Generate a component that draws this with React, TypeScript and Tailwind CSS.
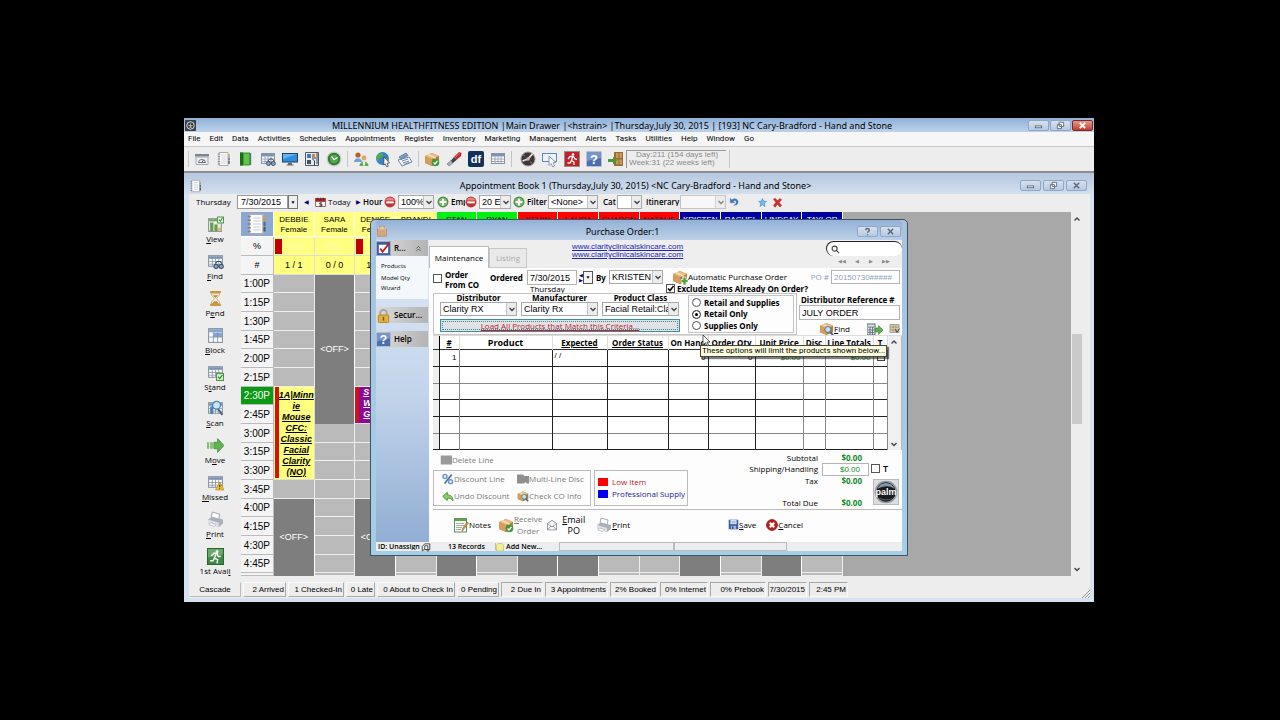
import type { ReactNode } from 'react';
import clsx from 'clsx';

// ---------------------------------------------------------------- icons

const calendar = (
  <>
    <rect x="1.5" y="2.5" width="13" height="10" fill="#fff" stroke="#8793a3" />
    <rect x="2" y="3" width="12" height="2.5" fill="#7d93b5" />
    <path d="M2 8h12M2 10.5h12M5 5.5v7M8 5.5v7M11 5.5v7" stroke="#8a96a8" strokeWidth=".8" />
  </>
);

const carton = (
  <>
    <path d="M1 5l7-3 7 3v7l-7 3-7-3z" fill="#b9783c" />
    <path d="M1 5l7 3v7l-7-3z" fill="#d79b5b" />
    <path d="M1 5l7-3 7 3-7 3z" fill="#e8bd84" />
    <path d="M4 3.7l7 3v2.5" stroke="#f6e3c0" strokeWidth="1.3" fill="none" />
  </>
);

const notebook = (
  <>
    <path d="M3 1.5h9v13H3z" fill="#fbfbfb" stroke="#a8adb5" />
    <path d="M5.5 4h5M5.5 6h5M5.5 8h5M5.5 10h5M5.5 12h5" stroke="#c9ced6" strokeWidth=".8" />
    <path d="M1.8 3h2M1.8 5.5h2M1.8 8h2M1.8 10.5h2M1.8 13h2" stroke="#7c828c" strokeWidth="1" />
    <path d="M13 3v3" stroke="#d59a33" strokeWidth="1.4" />
    <path d="M13 6.5v3" stroke="#3c6db0" strokeWidth="1.4" />
    <path d="M13 10v3" stroke="#555" strokeWidth="1.4" />
  </>
);

const printer = (
  <>
    <path d="M5 1l7 2-1 5-7-2z" fill="#fff" stroke="#8d97a5" strokeWidth=".8" />
    <path d="M1 8l4-2.5 10 2.5v4l-4 3-10-3.5z" fill="#a9b0ba" />
    <path d="M1 8l10 3v4L1 11.5z" fill="#dde1e6" />
    <path d="M3.5 11l5 1.6-1.5 2-5-1.6z" fill="#fff" stroke="#9aa2ad" strokeWidth=".6" />
  </>
);

const binoculars = (
  <g stroke="#3a4c66" fill="#8ea6c6">
    <circle cx="8.5" cy="12.5" r="2" />
    <circle cx="13.3" cy="12.5" r="2" />
    <path d="M8 10l1.5-2h3L14 10" fill="none" />
  </g>
);

const ICONS: Record<string, ReactNode> = {
  calendar,
  carton,
  notebook,
  printer,
  gauge: (
    <>
      <rect width="16" height="16" rx="1" fill="#3d4247" />
      <circle cx="8" cy="8" r="5.5" fill="none" stroke="#e5e8ea" strokeWidth="1.3" />
      <path d="M5 8h6M8 5v6M6 10.5h4" stroke="#cfd4d8" />
    </>
  ),
  register: (
    <>
      <rect x="1" y="3" width="14" height="2.5" fill="#7c8691" />
      <path d="M2 6h12v7.500H2z" fill="#eceff2" stroke="#a0a8b2" />
      <path d="M4.500 11.500a3.500 3 0 0 1 7 0z" fill="#fff" stroke="#66707c" />
      <path d="M8 11l1.500-2" stroke="#a33" />
    </>
  ),
  greenBook: (
    <>
      <path d="M2 1.5h10v13H2z" fill="#3ea32d" />
      <path d="M2 1.5h3v13H2z" fill="#1e6d19" />
      <path d="M6 3h5v10H6z" fill="#62c449" />
      <path d="M12.5 2v12" stroke="#4a7a8a" strokeWidth="1.4" />
    </>
  ),
  calendarFind: (
    <>
      {calendar}
      {binoculars}
    </>
  ),
  monitor: (
    <>
      <rect x="0" y="2" width="16" height="9.500" fill="#21405f" />
      <rect x="1" y="3" width="14" height="7.500" fill="#2f8ede" />
      <path d="M1 3h14L1 8z" fill="#63b4f2" />
      <path d="M6.500 12h3v1.500h-3zM4.500 14h7" fill="#667" stroke="#667" />
    </>
  ),
  report: (
    <>
      <path d="M1.5 1.5h13v13h-13z" fill="#e7ebf0" stroke="#4f5a68" />
      <path d="M3 3h4v4H3z" fill="#4678bd" />
      <path d="M8 3h3v3H8z" fill="#cf8b31" />
      <path d="M3 9h4v4H3z" fill="#43515f" />
      <path d="M8.5 8l2 2v4M13 2v11M8 7h4" stroke="#36404c" fill="none" />
    </>
  ),
  clock: (
    <>
      <circle cx="8" cy="8" r="6.8" fill="#2f8035" stroke="#c4c9c4" strokeWidth="1.2" />
      <circle cx="8" cy="8" r="4.200" fill="#57a84a" />
      <path d="M5.500 5.500L8 8.500l3.500-2" stroke="#fff" strokeWidth="1.2" fill="none" />
    </>
  ),
  people: (
    <>
      <circle cx="5" cy="4" r="2.6" fill="#b3602e" />
      <path d="M1 11c0-5 8-5 8 0z" fill="#6fa2d8" />
      <circle cx="11" cy="7" r="2.4" fill="#dba56c" />
      <path d="M6.5 15c0-6 9-6 9 0z" fill="#5cb04c" />
      <path d="M10 10.5h2v4h-2z" fill="#fff" />
    </>
  ),
  globe: (
    <>
      <circle cx="7.5" cy="7.5" r="6.5" fill="#3c7fc8" />
      <path d="M3 3c3-2 6 0 5 2s-4 1-4 4-2 0-3-2zM10 7c3 0 4 1 3 4s-3 1-4-1z" fill="#4fae48" />
      <path d="M9 6l5.5 6-2.5.2 1.2 3-1.600.6-1.200-3-1.600 1.400z" fill="#fff" stroke="#333" strokeWidth=".7" />
    </>
  ),
  phone: (
    <>
      <path d="M1 9l11-3 3 5-10 4z" fill="#f3f6f9" stroke="#75859a" />
      <path d="M2 6l7-4 2 2.500-7 4z" fill="#7d9cc3" stroke="#4f6f9a" strokeWidth=".7" />
      <path d="M5 10l6-2M6 12l6-2M7 13.500l5-2" stroke="#5f7ea8" strokeWidth=".9" />
    </>
  ),
  cartonOk: (
    <>
      {carton}
      <circle cx="11.500" cy="11.500" r="3.800" fill="#3e9b3b" />
      <path d="M9.600 11.500l1.400 1.500 2.500-3" stroke="#fff" strokeWidth="1.200" fill="none" />
    </>
  ),
  cartonAdd: (
    <>
      {carton}
      <path d="M11 8h3v2.500h2v3h-2V16h-3v-2.500H9v-3h2z" fill="#49a83c" stroke="#fff" strokeWidth=".7" />
    </>
  ),
  cartonFind: (
    <>
      {carton}
      <path d="M11 11l4 4" stroke="#4a6076" strokeWidth="2" />
      <circle cx="9.500" cy="9" r="3.200" fill="#bfe2f7" stroke="#47718f" />
    </>
  ),
  lipstick: (
    <>
      <path d="M1 13l4-3.500L7 12l-4 3z" fill="#a9b0b8" stroke="#6b7177" strokeWidth=".6" />
      <path d="M5 9.500L8 6l3 2.500L7 12z" fill="#3f444a" />
      <path d="M8 6l5-5 2.500 1-.5 3-4 3.500z" fill="#c41f24" />
      <path d="M9.500 6.500L13.500 2" stroke="#ef8b84" strokeWidth=".9" />
    </>
  ),
  df: (
    <>
      <rect width="16" height="16" rx="2" fill="#12305c" />
      <text x="8" y="12" fontSize="11" fontWeight="700" textAnchor="middle" fill="#fff" fontFamily="Liberation Sans, sans-serif">df</text>
    </>
  ),
  disc: (
    <>
      <circle cx="8" cy="8" r="7" fill="#3b3739" stroke="#9a9697" />
      <path d="M8 8L12.500 2.800M8 8L2.500 10" stroke="#e8dcdc" strokeWidth="1.800" />
      <path d="M3 4l2 1M12 12l-2-1" stroke="#bd5b4d" strokeWidth="1.300" />
      <circle cx="8" cy="8" r="1.800" fill="#c4b6b4" />
    </>
  ),
  pointer: (
    <>
      <rect x=".5" y="2.500" width="14" height="8" fill="#edf3fb" stroke="#5e88c0" />
      <path d="M7 5l7 6.500-3 .3 1.500 3.200-1.800.8L9 12.500 7 14.500z" fill="#fff" stroke="#6583ab" strokeWidth=".8" />
    </>
  ),
  exitRun: (
    <>
      <rect x=".5" y=".5" width="15" height="15" fill="#c41e26" stroke="#8f8f8f" />
      <circle cx="9" cy="3.500" r="1.300" fill="#fff" />
      <path d="M4 8l2-2.500h3.500L11 8l2 .5M8.500 6L7.500 9.500l2.500 1.500v3M7.500 9.500L6 12H3.500" stroke="#fff" strokeWidth="1.300" fill="none" />
    </>
  ),
  help: (
    <>
      <rect x=".5" y=".5" width="15" height="15" rx="1" fill="#4a6fae" stroke="#b4c0d4" />
      <path d="M1 1h14v6L1 10z" fill="#7795c8" />
      <text x="8" y="12.800" fontSize="13" fontWeight="700" textAnchor="middle" fill="#fff" fontFamily="Liberation Sans, sans-serif">?</text>
    </>
  ),
  door: (
    <>
      <path d="M6 1h9v14H6z" fill="#9a6b32" />
      <path d="M8 2h2.500v5H8zM11.500 2H14v5h-2.500zM8 8.500h2.500v5H8zM11.500 8.500H14v5h-2.500z" fill="#c99a58" />
      <path d="M0 8h5V5.500l4 4-4 4V11H0z" fill="#3f9c36" />
    </>
  ),
  calendarRed: (
    <>
      <rect x="1" y="2" width="14" height="12" fill="#fff" stroke="#722" />
      <rect x="1" y="2" width="14" height="5" fill="#a52222" />
      <path d="M4 1v3M8 1v3M12 1v3" stroke="#333" strokeWidth="1.300" />
      <path d="M10 8.500H7v2h3v2.500H6.500" stroke="#222" strokeWidth="1.400" fill="none" />
    </>
  ),
  minus: (
    <>
      <circle cx="8" cy="8" r="7.300" fill="#c23333" />
      <path d="M2 6a6.500 6.500 0 0 1 12 0z" fill="#e08583" />
      <path d="M3 8.500h10" stroke="#fff" strokeWidth="2.600" />
    </>
  ),
  plus: (
    <>
      <circle cx="8" cy="8" r="7.300" fill="#3f8f3c" />
      <circle cx="8" cy="8" r="5.800" fill="#7cb873" />
      <path d="M3.500 8h9M8 3.500v9" stroke="#fff" strokeWidth="2.600" />
    </>
  ),
  undo: (
    <path d="M2 2v7h7L6.500 6.700C9 4.500 12 6 11.500 9c-.3 2-1.800 3.500-4 4 4 .8 7-1.500 7-5.500C14.500 3 8 1.500 4.400 4.600z" fill="#3c7cc4" stroke="#2a5c98" strokeWidth=".6" />
  ),
  star: (
    <path d="M8 1l2 4.500 5 .5-3.700 3.300L12.500 15 8 12l-4.500 3 1.200-5.700L1 6l5-.5z" fill="#79b8ec" stroke="#3b83c4" />
  ),
  cross: <path d="M2 3l3-1 3 3.500L11.500 2 14 4l-3.500 4 3.500 4.500-2.500 2L8 10.500 4.500 15 2 12.500 5.500 8z" fill="#d0302b" stroke="#982019" strokeWidth=".6" />,
  view: (
    <>
      <rect x="1.500" y="2.500" width="12" height="12" fill="#e8efe0" stroke="#8793a3" />
      <path d="M2 3h11v2H2z" fill="#7da05b" />
      <path d="M3 6h3v8H3zM7 8h3v6H7z" fill="#6d9a4d" />
      <path d="M10.500 11h3v3h-3z" fill="#d7c163" />
      <rect x="10" y="1" width="5.500" height="5.500" fill="#fff" stroke="#4a9b3f" />
      <path d="M11.300 3.500l1.200 1.300 2-2.800" stroke="#2f8e2a" fill="none" />
    </>
  ),
  hourglass: (
    <>
      <path d="M3 1h10v2H3zM3 13h10v2H3z" fill="#c8953a" />
      <path d="M4 3h8c0 3-3 4-3 5s3 2 3 5H4c0-3 3-4 3-5S4 6 4 3z" fill="#f4ecd9" stroke="#c2a574" strokeWidth=".8" />
      <path d="M5.500 5h5L8 7.500zM5 13c1-2 2-2.500 3-2.500s2 .5 3 2.500z" fill="#c98a2b" />
    </>
  ),
  block: (
    <>
      <rect x="1.500" y="1.500" width="13" height="13" fill="#f7f9fc" stroke="#8793a3" />
      <rect x="2" y="2" width="12" height="3" fill="#8ea3c6" />
      <path d="M6 5.500h4v4H6zM10 5.500h4v4h-4z" fill="#7ea4d8" />
      <path d="M2 9.500h12M6 5v9.500M10 5v9.500" stroke="#8a96a8" strokeWidth=".8" />
    </>
  ),
  calendarOk: (
    <>
      {calendar}
      <rect x="9" y="9" width="6.500" height="6.500" fill="#dff0d8" stroke="#4a9b3f" />
      <path d="M10.500 12l1.500 1.700 2.600-3.400" stroke="#2f8e2a" strokeWidth="1.200" fill="none" />
    </>
  ),
  scan: (
    <>
      {calendar}
      <path d="M3 6h3v7H3z" fill="#5080b8" />
      <path d="M10 8l4.500 6" stroke="#4a6076" strokeWidth="1.800" />
      <circle cx="9" cy="5" r="3.700" fill="#c9e6f8" stroke="#4a87b5" strokeWidth="1.200" />
    </>
  ),
  move: (
    <>
      <path d="M0 5h2v6H0zM3 5h2.500v6H3z" fill="#7fbf6b" />
      <path d="M6.500 5H10V1.500L16 8l-6 6.500V11H6.500z" fill="#62b250" stroke="#3c8a33" strokeWidth=".7" />
    </>
  ),
  missed: (
    <>
      {calendar}
      <path d="M12 7.500l4 7.500H8z" fill="#f2c43b" stroke="#b98a18" strokeWidth=".7" />
      <path d="M12 10v2.500M12 13.300v.8" stroke="#222" />
    </>
  ),
  avail: (
    <>
      <rect x=".5" y=".5" width="15" height="15" fill="#3f8a45" stroke="#2a6831" />
      <path d="M1 1h14v5L1 9z" fill="#69a868" />
      <circle cx="9.500" cy="3.500" r="1.400" fill="#fff" />
      <path d="M4 7.500L6.500 5h3l1 3h2.500M8.500 6L7 9.500l3 1.500-.5 3.500M7 9.500L5.500 12H3" stroke="#fff" strokeWidth="1.300" fill="none" />
    </>
  ),
  checkBox: (
    <>
      <rect x=".5" y=".5" width="15" height="15" fill="#3a5da0" stroke="#9fb0cc" />
      <rect x="3" y="4" width="10" height="9" fill="#fff" />
      <path d="M4.500 8l2.500 3.500L14 2.500" stroke="#c01f24" strokeWidth="2" fill="none" />
    </>
  ),
  lock: (
    <>
      <path d="M4.500 8V5.500a3.500 3.500 0 0 1 7 0V8" stroke="#a5a5a0" strokeWidth="2" fill="none" />
      <rect x="2.500" y="7.500" width="11" height="8" rx="1" fill="#e4b23c" stroke="#b28321" />
      <path d="M8 9.500v4" stroke="#7d5a12" strokeWidth="1.600" />
    </>
  ),
  calcGo: (
    <>
      <rect x="0" y="3" width="8" height="11" fill="#dfe4ea" stroke="#596675" />
      <path d="M1 6h6M1 9h6M1 11.500h6M3 6v8M5.500 6v8" stroke="#596675" strokeWidth=".8" />
      <path d="M8 7h3.500V4.500L16 9l-4.500 4.500V11H8z" fill="#5cb24a" stroke="#357c2b" strokeWidth=".6" />
    </>
  ),
  gridEdit: (
    <>
      <rect x="1.500" y="2.500" width="13" height="11" fill="#f0d98f" stroke="#687386" />
      <path d="M2 6h12M2 10h12M6 3v10M10 3v10" stroke="#687386" strokeWidth=".8" />
      <path d="M9 9l2.500 4.500L15.500 8" stroke="#333e55" strokeWidth="1.300" fill="none" />
    </>
  ),
  grayBlock: <rect x="1" y="2" width="15" height="12" fill="#9a9a9a" />,
  grayTag: <path d="M0 2h8l2 2h6v10h-3l-2-2-2 2H0z" fill="#8e8e8e" />,
  percent: (
    <>
      <path d="M13 2L3.500 14" stroke="#4673a8" strokeWidth="2.400" />
      <circle cx="4" cy="4.500" r="2.600" fill="none" stroke="#6b96c6" strokeWidth="2" />
      <circle cx="11.500" cy="11.500" r="2.600" fill="none" stroke="#6b96c6" strokeWidth="2" />
    </>
  ),
  undoGreen: (
    <path d="M1 8.500L7 3v3.500c5 0 8 3 7.500 8-1.500-3-4-4-7.500-3.500V14z" fill="#8ccf6f" stroke="#3f8f33" strokeWidth="1.200" />
  ),
  notes: (
    <>
      <rect x="1.500" y="1.500" width="12" height="13.500" fill="#fff" stroke="#5d8f56" />
      <path d="M1.500 1.500h12v2.500h-12z" fill="#5fa052" />
      <path d="M3 6.500h8M3 8.500h8M3 10.500h6M3 12.500h5" stroke="#94a594" strokeWidth=".9" />
      <path d="M15.500 6l-5 6.500-1.500 2 .3-2.700L14 5z" fill="#d99c3f" stroke="#7b5521" strokeWidth=".5" />
    </>
  ),
  envelope: (
    <>
      <path d="M2 6l6-4.500L14 6v8.500H2z" fill="#f3f4f6" stroke="#7d8490" />
      <path d="M2 6l6 4.500L14 6M2 14.500l4.500-5M14 14.500l-4.500-5" stroke="#7d8490" fill="none" />
    </>
  ),
  floppy: (
    <>
      <path d="M1 1h14v14H1z" fill="#3d62a8" />
      <path d="M3.500 1.500h9v6h-9z" fill="#dfe8f6" />
      <path d="M5 3.500h6M5 5.500h6" stroke="#7d95c0" strokeWidth=".9" />
      <path d="M4.500 10h7v5h-7z" fill="#aab9d4" />
      <path d="M6 11h2v3.500H6z" fill="#2b477f" />
    </>
  ),
  cancel: (
    <>
      <circle cx="8" cy="8" r="7.300" fill="#b7211f" stroke="#7d1413" />
      <path d="M5 5l6 6M11 5l-6 6" stroke="#fff" strokeWidth="3" />
    </>
  ),
  bag: (
    <>
      <path d="M2 5h12v10H2z" fill="#d6a77c" stroke="#a87a52" strokeWidth=".7" />
      <path d="M3 2.500h10V6H3z" fill="#e9c9a8" />
      <path d="M5 5V1.500h2M9 1.500h2V5" stroke="#b98a62" fill="none" />
    </>
  ),
  sheets: (
    <>
      <path d="M2 7l4-4h8v9H6l-4 2z" fill="#fff" stroke="#222" strokeWidth="1.300" />
      <path d="M6 12V6h5v6M9 14h4" stroke="#222" fill="none" strokeWidth="1.300" />
    </>
  ),
  note: <path d="M1 4l3-3h8l3 4v11H1z" fill="#f4ef8e" stroke="#9a9548" strokeWidth=".8" />,
};

function Icon({ name, className = 'size-4' }: { name: string; className?: string }) {
  return (
    <svg viewBox="0 0 16 16" className={clsx('shrink-0', className)} aria-hidden="true">
      {ICONS[name]}
    </svg>
  );
}

function Chevron({ up, className }: { up?: boolean; className?: string }) {
  return (
    <svg viewBox="0 0 8 8" className={clsx('size-2 shrink-0', className)} aria-hidden="true">
      <path d={up ? 'M1.500 5.500L4 3l2.500 2.500' : 'M1.500 3L4 5.500 6.500 3'} fill="none" stroke="#444" strokeWidth="1.400" />
    </svg>
  );
}

// ---------------------------------------------------------------- controls

function Combo({ label, value, className, disabled }: { label: string; value: string; className?: string; disabled?: boolean }) {
  return (
    <span className={clsx('relative flex h-[14px] shrink-0 border border-[#a9a9a9] bg-white', disabled && 'opacity-60', className)}>
      <select
        aria-label={label}
        disabled={disabled}
        className="w-full appearance-none overflow-hidden pl-[2px] font-['Liberation_Sans',sans-serif] text-[9px] leading-[12px] font-normal whitespace-nowrap"
      >
        <option>{value}</option>
      </select>
      <span className="pointer-events-none absolute inset-y-0 right-0 flex w-[10px] items-center justify-center border-l border-[#c4c4c4] bg-[#ececec]">
        <Chevron />
      </span>
    </span>
  );
}

function WinButton({ kind, red }: { kind: 'min' | 'max' | 'close' | 'help'; red?: boolean }) {
  return (
    <button
      aria-label={kind}
      className={clsx(
        'flex h-[11px] w-[21px] items-center justify-center rounded-[2px] border',
        red ? 'border-[#7d2a22] bg-linear-to-b from-[#e39a8e] to-[#c23a28]' : 'border-[#8fa6c4] bg-linear-to-b from-[#d5e1f0] to-[#b7cae2]',
      )}
    >
      <svg viewBox="0 0 10 10" className="size-[9px]" fill="none" stroke={red ? '#fff' : '#5b6779'}>
        {kind === 'min' && <rect x="1.500" y="5.500" width="7" height="2" fill="#fff" />}
        {kind === 'max' && <path d="M3.500 1.500h5v4.500h-5zM1.500 4h4.500v4.500H1.500z" fill="#fff" />}
        {kind === 'close' && <path d="M2 2l6 6M8 2L2 8" strokeWidth={red ? 2 : 1.6} />}
        {kind === 'help' && <path d="M3 3.500C3 1 7 1 7 3.500 7 5 5 5 5 6.500M5 8v1.200" strokeWidth="1.600" />}
      </svg>
    </button>
  );
}

/* Caption whose access key is underlined */
function Caption({ text, hot = 0 }: { text: string; hot?: number }) {
  return (
    <span>
      {text.slice(0, hot)}
      <u>{text[hot]}</u>
      {text.slice(hot + 1)}
    </span>
  );
}

// ---------------------------------------------------------------- data

const MENUS = ['File', 'Edit', 'Data', 'Activities', 'Schedules', 'Appointments', 'Register', 'Inventory', 'Marketing', 'Management', 'Alerts', 'Tasks', 'Utilities', 'Help', 'Window', 'Go'];

const TOOLS = [
  ['register', 'notebook', 'greenBook', 'calendarFind', 'monitor', 'report', 'clock'],
  ['people', 'globe', 'phone'],
  ['cartonOk', 'lipstick', 'df', 'calendar'],
  ['disc', 'pointer', 'exitRun', 'help', 'door'],
];

const SIDE: { icon: string; text: string; hot: number }[] = [
  { icon: 'view', text: 'View', hot: 0 },
  { icon: 'calendarFind', text: 'Find', hot: 0 },
  { icon: 'hourglass', text: 'Pend', hot: 1 },
  { icon: 'block', text: 'Block', hot: 0 },
  { icon: 'calendarOk', text: 'Stand', hot: 1 },
  { icon: 'scan', text: 'Scan', hot: 0 },
  { icon: 'move', text: 'Move', hot: 1 },
  { icon: 'missed', text: 'Missed', hot: 0 },
  { icon: 'printer', text: 'Print', hot: 0 },
  { icon: 'avail', text: '1st Avail', hot: 8 },
];

type Block = { from: number; rows: number; kind: 'off' | 'minnie' | 'purple' };
type Staff = { name: string; tone: string; pct?: string; bar?: boolean; count?: string; blocks: Block[] };

const YELLOW = 'bg-[#ffff80] text-black';
const GREEN = 'bg-[#00f010] text-black';
const RED = 'bg-[#fb0404] text-[#500]';
const NAVY = 'bg-[#0000a0] text-white';
const allOff: Block[] = [{ from: 0, rows: 17, kind: 'off' }];

const STAFF: Staff[] = [
  { name: 'DEBBIE', tone: YELLOW, pct: '41%', bar: true, count: '1 / 1', blocks: [{ from: 6, rows: 5, kind: 'minnie' }, { from: 12, rows: 5, kind: 'off' }] },
  { name: 'SARA', tone: YELLOW, pct: '0%', count: '0 / 0', blocks: [{ from: 0, rows: 8, kind: 'off' }] },
  { name: 'DENISE', tone: YELLOW, bar: true, count: '1 / 1', blocks: [{ from: 6, rows: 2, kind: 'purple' }, { from: 12, rows: 5, kind: 'off' }] },
  { name: 'BRANDI', tone: YELLOW, blocks: [] },
  { name: 'STAN', tone: GREEN, blocks: allOff },
  { name: 'RYAN', tone: GREEN, blocks: [] },
  { name: 'KEVIN', tone: RED, blocks: allOff },
  { name: 'LAURA', tone: RED, blocks: allOff },
  { name: 'SHARON', tone: RED, blocks: [] },
  { name: 'NATALIE', tone: RED, blocks: [] },
  { name: 'KRISTEN', tone: NAVY, blocks: allOff },
  { name: 'RACHEL', tone: NAVY, blocks: [] },
  { name: 'LINDSAY', tone: NAVY, blocks: allOff },
  { name: 'TAYLOR', tone: NAVY, blocks: [] },
];

const TIMES = ['1:00P', '1:15P', '1:30P', '1:45P', '2:00P', '2:15P', '2:30P', '2:45P', '3:00P', '3:15P', '3:30P', '3:45P', '4:00P', '4:15P', '4:30P', '4:45P', ''];

const STATUS: { text: string; className: string; raised?: boolean }[] = [
  { text: '2 Arrived', className: 'w-[43px]', raised: true },
  { text: '1 Checked-In', className: 'w-[56px]', raised: true },
  { text: '0 Late', className: 'w-[29px]', raised: true },
  { text: '0 About to Check In', className: 'w-[78px]', raised: true },
  { text: '0 Pending', className: 'w-[42px]', raised: true },
  { text: '2 Due In', className: 'w-[42px]' },
  { text: '3 Appointments', className: 'w-[63px]' },
  { text: '2% Booked', className: 'w-[48px]' },
  { text: '0% Internet', className: 'w-[48px]' },
  { text: '0% Prebook', className: 'w-[56px]' },
  { text: '7/30/2015', className: 'w-[39px]' },
  { text: '2:45 PM', className: 'w-[39px]' },
];

// ---------------------------------------------------------------- appointment book

function BlockCell({ block }: { block: Block }) {
  if (block.kind === 'minnie') {
    return (
      <td rowSpan={block.rows} className="border-r border-b border-[#ddd] bg-[#ffff80] p-0 align-top">
        <div className="ml-[1px] h-[91px] overflow-hidden border-l-4 border-[#d41010] pt-[3px] text-center text-[9px] leading-[11px] font-bold whitespace-nowrap italic underline">
          {['1A|Minn', 'ie', 'Mouse', 'CFC:', 'Classic', 'Facial', 'Clarity', '(NO)'].map((line) => (
            <div key={line} className="-mx-1">{line}</div>
          ))}
        </div>
      </td>
    );
  }
  if (block.kind === 'purple') {
    return (
      <td rowSpan={block.rows} className="border-r border-b border-[#ddd] bg-[#8b0a93] p-0 align-top text-white">
        <div className="h-[35px] border-l-4 border-[#d41010] pl-1 text-[9px] leading-[11px] font-bold italic underline">
          <div>S</div>
          <div>W</div>
          <div>G</div>
        </div>
      </td>
    );
  }
  return (
    <td rowSpan={block.rows} className="border-r border-white bg-[#7e7e7e] p-0 text-center text-[9px] leading-none text-white">
      &lt;OFF&gt;
    </td>
  );
}

function Schedule() {
  return (
    <div className="flex min-w-0 grow bg-[#a8a8a8]">
      <table className="w-[602px] shrink-0 table-fixed border-separate border-spacing-0 self-start font-['Liberation_Sans',sans-serif] leading-none">
        <colgroup>
          <col className="w-[33px]" />
          {STAFF.map((s) => <col key={s.name} />)}
        </colgroup>
        <thead>
          <tr className="h-[25px]">
            <th className="border-r border-b border-white bg-[#8ca8d0] p-0">
              <Icon name="notebook" className="mx-auto size-6" />
            </th>
            {STAFF.map((s) => (
              <th key={s.name} className={clsx('border-r border-b border-white p-0 pt-[3px] align-top text-[8px] leading-[10px] font-normal', s.tone)}>
                {s.name}
                <br />
                Female
              </th>
            ))}
          </tr>
          <tr className="h-[19px]">
            <th className="border-r border-b border-[#bbb] bg-[#f4f4f4] p-0 text-[9px] font-normal">%</th>
            {STAFF.map((s) => (
              <td key={s.name} className={clsx('border-r border-b border-[#ddd] p-0', s.tone)}>
                <div className="flex items-center">
                  <span className={clsx('ml-[1px] h-[15px] w-[7px]', s.bar && 'bg-[#c00000]')} />
                  <span className="pl-[4px] text-[9px] text-[#ffffb8]">{s.pct}</span>
                </div>
              </td>
            ))}
          </tr>
          <tr className="h-[19px]">
            <th className="border-r border-b border-[#bbb] bg-[#f4f4f4] p-0 text-[9px] font-normal">#</th>
            {STAFF.map((s) => (
              <td key={s.name} className={clsx('border-r border-b border-[#ddd] p-0 text-center text-[9px]', s.tone)}>{s.count}</td>
            ))}
          </tr>
        </thead>
        <tbody>
          {TIMES.map((time, row) => (
            <tr key={row} className={row === 16 ? 'h-[3px]' : row % 3 === 0 ? 'h-[18px]' : 'h-[19px]'}>
              <th
                className={clsx(
                  'border-r border-b border-[#bbb] p-0 pr-[3px] text-right text-[10px] font-normal',
                  time === '2:30P' ? 'bg-[#0a9a14] text-white' : 'bg-[#f4f4f4]',
                  time && 'pt-[1px]',
                )}
              >
                {time}
              </th>
              {STAFF.map((s) => {
                const block = s.blocks.find((b) => row >= b.from && row < b.from + b.rows);
                if (!block) return <td key={s.name} className="border-r border-b border-[#eee] bg-[#bababa] p-0" />;
                return block.from === row ? <BlockCell key={s.name} block={block} /> : null;
              })}
            </tr>
          ))}
        </tbody>
      </table>
      <div className="ml-auto flex w-[12px] flex-col items-center justify-between bg-[#eeedee] py-[3px]">
        <Chevron up />
        <div className="mb-[30px] h-[90px] w-[10px] bg-[#cacaca]" />
        <Chevron />
      </div>
    </div>
  );
}

function BookToolbar() {
  const caption = 'overflow-hidden whitespace-nowrap font-semibold';
  return (
    <div className="flex h-[18px] items-center pb-[2px] pl-[7px]">
      <span className="w-[41px]">Thursday</span>
      <input aria-label="Book date" defaultValue="7/30/2015" className="h-[14px] w-[51px] border border-[#999] bg-white pl-[3px] font-['Liberation_Sans',sans-serif] text-[9px]" />
      <button aria-label="Pick date" className="flex h-[14px] w-[10px] items-center justify-center border border-[#777] bg-[#eee] text-[5px]">▼</button>
      <button aria-label="Previous day" className="w-[17px] text-center text-[6px] text-[#00007a]">◀</button>
      <button className="flex w-[39px] items-center gap-[2px]">
        <Icon name="calendarRed" className="size-[11px]" />
        Today
      </button>
      <button aria-label="Next day" className="w-[9px] text-[6px] text-[#00007a]">▶</button>
      <span className={clsx(caption, 'w-[21px]')}>Hour</span>
      <button aria-label="Fewer hours" className="w-[14px]"><Icon name="minus" className="size-[12px]" /></button>
      <Combo label="Zoom" value="100%" className="w-[36px]" />
      <button aria-label="More hours" className="flex w-[17px] justify-center"><Icon name="plus" className="size-[12px]" /></button>
      <span className={clsx(caption, 'w-[14px]')}>Emp</span>
      <button aria-label="Fewer employees" className="w-[14px]"><Icon name="minus" className="size-[12px]" /></button>
      <Combo label="Employees" value="20 Employees" className="w-[32px]" />
      <button aria-label="More employees" className="flex w-[16px] justify-center"><Icon name="plus" className="size-[12px]" /></button>
      <span className={clsx(caption, 'w-[21px]')}>Filter</span>
      <Combo label="Filter" value="<None>" className="w-[50px]" />
      <span className={clsx(caption, 'w-[19px] pl-[5px]')}>Cat</span>
      <Combo label="Category" value="" className="w-[25px]" />
      <span className={clsx(caption, 'w-[38px] pl-[4px]')}>Itinerary</span>
      <Combo label="Itinerary" value="" disabled className="w-[46px]" />
      <button aria-label="Refresh" className="ml-[3px]"><Icon name="undo" className="size-[10px]" /></button>
      <button aria-label="Favourite" className="ml-[19px]"><Icon name="star" className="size-[9px]" /></button>
      <button aria-label="Close book" className="ml-[5px]"><Icon name="cross" className="size-[11px]" /></button>
    </div>
  );
}

// ---------------------------------------------------------------- purchase order

const COLUMNS: { head: string; col: string; underline?: boolean; first?: string }[] = [
  { head: '', col: 'w-[6px]' },
  { head: '#', col: 'w-[20px]', underline: true, first: '1' },
  { head: 'Product', col: 'w-[93px]' },
  { head: 'Expected', col: 'w-[55px]', underline: true, first: '/ /' },
  { head: 'Order Status', col: 'w-[61px]', underline: true },
  { head: 'On Hand', col: 'w-[40px]', first: '0' },
  { head: 'Order Qty', col: 'w-[47px]', underline: true, first: '0' },
  { head: 'Unit Price', col: 'w-[48px]', underline: true, first: '$0.00' },
  { head: 'Disc', col: 'w-[22px]', underline: true },
  { head: 'Line Totals', col: 'w-[48px]', underline: true, first: '$0.00' },
  { head: 'T', col: 'w-[14px]' },
];

const FIELD = "border border-[#b4b4b4] bg-white font-['Liberation_Sans',sans-serif]";
const BOLD = "font-['Noto_Sans',sans-serif] font-bold";

function PanelHead({ icon, text }: { icon: string; text: string }) {
  return (
    <h3 className="flex h-[16px] items-center gap-[3px] bg-linear-to-r from-[#dcdcdc] to-[#b4b4b4] text-[8px] font-semibold">
      <Icon name={icon} className="size-[15px]" />
      {text}
      {text === 'R...' && (
        <svg viewBox="0 0 8 8" className="mr-[6px] ml-auto size-[7px]" fill="none" stroke="#555">
          <path d="M1.500 4L4 1.500 6.500 4M1.500 7L4 4.500 6.500 7" />
        </svg>
      )}
    </h3>
  );
}

function LineItems() {
  return (
    <div className="flex border-t border-[#ddd]">
      <table className="w-[454px] table-fixed border-collapse bg-white leading-none">
        <colgroup>
          {COLUMNS.map((c, i) => <col key={i} className={c.col} />)}
        </colgroup>
        <thead>
          <tr className="h-[13px] border-b border-[#333]">
            {COLUMNS.map((c, i) => (
              <th key={i} className={clsx('p-0 pt-[1px] whitespace-nowrap', i === 0 ? 'border-r border-black bg-[#eee]' : i === 2 ? 'text-[9px]' : 'border-x border-[#ddd]', c.underline && 'underline')}>
                {c.head}
              </th>
            ))}
          </tr>
        </thead>
        <tbody>
          {[0, 1, 2, 3, 4, 5].map((row) => (
            <tr key={row} className={clsx('border-b', row % 3 === 2 ? 'h-[16px]' : 'h-[17px]', row === 1 || row === 4 ? 'border-[#888]' : 'border-[#222]')}>
              {COLUMNS.map((c, i) => (
                <td
                  key={i}
                  className={clsx(
                    "border-r p-0 pr-[2px] font-['Liberation_Sans',sans-serif] whitespace-nowrap",
                    i === 0 ? 'bg-[#eee]' : i === 3 ? 'pb-[4px] pl-[2px] text-left' : 'text-right',
                    c.first?.startsWith('$') && 'text-[#1c7c2c]',
                    i === 1 || i > 6 ? 'border-[#888]' : 'border-[#222]',
                  )}
                >
                  {row === 0 && c.first}
                  {row === 0 && c.head === 'T' && <input type="checkbox" aria-label="Taxable line" className="size-[8px] appearance-none border border-[#444] align-middle" />}
                </td>
              ))}
            </tr>
          ))}
        </tbody>
      </table>
      <div className="flex grow flex-col items-center justify-between border-r border-[#bbb] bg-[#f0f0f0] py-[2px]">
        <Chevron up />
        <Chevron />
      </div>
    </div>
  );
}

function Criteria() {
  const box = 'flex w-[77px] flex-col text-center leading-[8px]';
  return (
    <div className="flex h-[42px] pr-[2px]">
      <div className="flex w-[364px] shrink-0 border border-[#c4c4c4] pr-[2px]">
        <div className="flex w-[254px] shrink-0 flex-col pl-[6px]">
          <div className={clsx('flex gap-[4px]', BOLD)}>
            <div className={box}>Distributor<Combo label="Distributor" value="Clarity RX" /></div>
            <div className={box}>Manufacturer<Combo label="Manufacturer" value="Clarity Rx" /></div>
            <div className={box}>Product Class<Combo label="Product Class" value="Facial Retail:Clarity" /></div>
          </div>
          <button className="mt-[3px] h-[13px] w-[240px] border border-[#3c8f98] bg-[#dfe1e4] leading-[9px] text-[#c4202c] underline outline outline-offset-[-3px] outline-[#3c8f98] outline-dotted">
            Load All Products that Match this Criteria...
          </button>
        </div>
        <fieldset className={clsx('my-px flex grow flex-col justify-evenly border border-[#c4c4c4] pl-[3px]', BOLD)}>
          {['Retail and Supplies', 'Retail Only', 'Supplies Only'].map((text) => (
            <label key={text} className="flex items-center gap-[3px] leading-[10px] whitespace-nowrap">
              <input
                type="radio"
                name="scope"
                defaultChecked={text === 'Retail Only'}
                className="size-[9px] appearance-none rounded-full border border-[#555] bg-white checked:bg-black checked:shadow-[inset_0_0_0_2px_white]"
              />
              {text}
            </label>
          ))}
        </fieldset>
      </div>
      <div className="ml-[2px] flex min-w-0 grow flex-col">
        <label htmlFor="ref" className={clsx('pt-[2px] pl-[2px] leading-[10px] whitespace-nowrap', BOLD)}>Distributor Reference #</label>
        <input id="ref" defaultValue="JULY ORDER" className={clsx(FIELD, 'h-[15px] w-full pl-[2px] text-[9px]')} />
        <div className="flex h-[15px] items-center pt-[2px] pl-[20px]">
          <button className="flex items-center">
            <Icon name="cartonFind" className="size-[15px]" />
            <Caption text="Find" />
          </button>
          <button aria-label="Calculate" className="ml-auto"><Icon name="calcGo" className="size-[16px]" /></button>
          <button aria-label="Edit grid" className="ml-[6px]"><Icon name="gridEdit" className="size-[11px]" /></button>
        </div>
      </div>
    </div>
  );
}

function OrderHeader() {
  return (
    <div className="flex h-[25px] pt-[2px] pr-[2px]">
      <label className={clsx('flex w-[57px] shrink-0 items-start gap-[3px] leading-[10px] whitespace-nowrap', BOLD)}>
        <input type="checkbox" className="mt-[4px] size-[9px] shrink-0 appearance-none border border-[#555] bg-white" />
        <span>Order<br />From CO</span>
      </label>
      <label htmlFor="ordered" className={clsx('w-[37px] shrink-0 pt-[3px] leading-[10px]', BOLD)}>Ordered</label>
      <div className="flex w-[50px] shrink-0 flex-col">
        <input id="ordered" defaultValue="7/30/2015" className={clsx(FIELD, 'h-[15px] w-full pl-[2px] text-[9px]')} />
        <span className="pl-[3px] text-[8px] leading-[8px]">Thursday</span>
      </div>
      <div className="ml-[2px] flex h-[15px] items-center">
        <span className="flex w-[4px] flex-col text-[5px] text-[#00007a]"><span>◀</span><span>▶</span></span>
        <button aria-label="Pick order date" className="flex h-[13px] w-[10px] items-center justify-center border border-[#555] bg-[#f4f4f4] text-[5px]">▼</button>
      </div>
      <span className={clsx('w-[16px] pt-[3px] pl-[3px] leading-[10px]', BOLD)}>By</span>
      <Combo label="By" value="KRISTEN" className="w-[54px]" />
      <div className="ml-[3px] flex min-w-0 grow flex-col">
        <div className="flex h-[14px] items-center pl-[6px]">
          <button className="flex shrink-0 items-center whitespace-nowrap">
            <Icon name="cartonAdd" className="size-[16px]" />
            Automatic Purchase Order
          </button>
          <label htmlFor="po" className="ml-auto shrink-0 pr-[2px] text-[#8ea0b8]">PO #</label>
          <input id="po" defaultValue="20150730#####" className={clsx(FIELD, 'h-[14px] w-[69px] pl-[2px] text-[#8ea0b8]')} />
        </div>
        <label className={clsx('flex h-[10px] items-center gap-[2px] whitespace-nowrap', BOLD)}>
          <span className="relative flex">
            <input type="checkbox" defaultChecked className="size-[9px] appearance-none border border-[#555] bg-white" />
            <svg viewBox="0 0 9 9" className="pointer-events-none absolute inset-0 size-[9px]">
              <path d="M2 4.500L4 6.500 7.500 2" fill="none" stroke="#000" strokeWidth="1.500" />
            </svg>
          </span>
          Exclude Items Already On Order?
        </label>
      </div>
    </div>
  );
}

function Totals() {
  const amount = 'w-[44px] text-right font-bold text-[#128a28]';
  return (
    <div className="ml-auto flex pt-[3px]">
      <div className="flex flex-col">
        <div className="flex h-[11px] items-center justify-end">Subtotal<span className={amount}>$0.00</span></div>
        <label className="flex h-[12px] items-center justify-end">
          Shipping/Handling
          <input defaultValue="$0.00" className={clsx(FIELD, '-mr-[7px] ml-[4px] h-[13px] w-[47px] pr-[8px] text-right text-[#128a28]')} />
        </label>
        <div className="flex h-[11px] items-center justify-end">Tax<span className={amount}>$0.00</span></div>
        <div className="mt-[12px] flex h-[11px] items-center justify-end">Total Due<span className={amount}>$0.00</span></div>
      </div>
      <div className="ml-[9px] flex w-[30px] flex-col pt-[11px]">
        <label className="flex items-center gap-[3px] text-[9px] font-semibold">
          <input type="checkbox" className="size-[9px] appearance-none border border-[#555] bg-white" />
          T
        </label>
        <button aria-label="palm" className="mt-[6px] ml-[2px] flex size-[26px] items-center justify-center border border-[#bbb] bg-[#ddd]">
          <svg viewBox="0 0 24 24" className="size-[24px]">
            <circle cx="12" cy="12" r="10.500" fill="#16191d" stroke="#8f979f" strokeWidth="1.600" />
            <path d="M3.500 9a9 9 0 0 1 17 0C15 5 9 6 3.500 9z" fill="#8a97a5" />
            <path d="M5 17.500c5 2.500 10 2.500 14 0-3 4-11 4-14 0z" fill="#5c6772" />
            <text x="12" y="15" fontSize="9" fontWeight="700" textAnchor="middle" fill="#fff" fontFamily="Liberation Sans Narrow, Liberation Sans, sans-serif">palm</text>
          </svg>
        </button>
      </div>
    </div>
  );
}

function PurchaseOrder() {
  const gray = 'flex items-center text-[#7c7c7c] whitespace-nowrap';
  return (
    <section
      aria-label="Purchase Order"
      className="absolute top-[101px] left-[186px] w-[538px] rounded-t-[5px] border border-[#3f5263] bg-linear-to-b from-[#a9c2df] to-[#a5cfe6] px-[5px] pb-[4px]"
    >
      <div className="flex h-[20px] items-center rounded-t-[4px] bg-linear-to-b from-[#93b1d6] to-[#bcd0e8] pt-[2px]">
        <Icon name="bag" className="size-[12px]" />
        <h2 className="grow text-center font-['Noto_Sans',sans-serif] text-[9px]">Purchase Order:1</h2>
        <div className="flex gap-[2px] pr-[1px]">
          <WinButton kind="help" />
          <WinButton kind="close" />
        </div>
      </div>

      <div className="flex h-[302px]">
        <aside className="w-[53px] shrink-0 bg-linear-to-b from-[#dfeaf6] via-[#c3d5eb] to-[#92aed4] pr-[1px]">
          <PanelHead icon="checkBox" text="R..." />
          <div className="flex h-[43px] flex-col items-start bg-[#f4f7fb] pl-[5px] text-[6px] leading-[10px]">
            <button className="pt-[5px]">Products</button>
            <button className="pt-[2px] text-left">Model Qty<br />Wizard</button>
          </div>
          <div className="mt-[8px]"><PanelHead icon="lock" text="Secur..." /></div>
          <div className="mt-[8px]"><PanelHead icon="help" text="Help" /></div>
        </aside>

        <div className="flex min-w-0 grow flex-col bg-[#fdfdfd]">
          <div className="flex h-[28px] bg-[#eeeeef]">
            <div role="tablist" className="flex items-end">
              <button role="tab" aria-selected="true" className="h-[22px] w-[60px] border border-b-0 border-[#bbb] bg-[#fdfdfd]">Maintenance</button>
              <button role="tab" className="h-[20px] w-[38px] border border-[#c8c8c8] bg-[#e9e9e9] text-[#aaa]">Listing</button>
            </div>
            <div className="ml-[45px] flex flex-col pt-[3px] font-['Liberation_Sans',sans-serif] leading-[8px] text-[#2222b4] underline">
              <a href="#clarity">www.clarityclinicalskincare.com</a>
              <a href="#clarity">www.clarityclinicalskincare.com</a>
            </div>
            <div className="ml-auto flex w-[76px] flex-col pt-[1px]">
              <label className="flex h-[15px] items-center rounded-full border-t border-l border-[#222] bg-white pl-[4px]">
                <svg viewBox="0 0 10 10" className="size-[9px] shrink-0" fill="none" stroke="#444" strokeWidth="1.300">
                  <circle cx="4" cy="4" r="2.800" />
                  <path d="M6 6l3 3" />
                </svg>
                <input aria-label="Search" className="min-w-0 grow" />
              </label>
              <div className="flex justify-between px-[12px] pt-[3px] text-[5px] text-[#888]">
                <span>◀◀</span>
                <span>◀</span>
                <span>▶</span>
                <span>▶▶</span>
              </div>
            </div>
          </div>

          <div className="flex grow flex-col pl-[4px]">
            <OrderHeader />
            <Criteria />
            <LineItems />

            <div className="flex h-[60px] border-b border-[#bbb] pr-[1px]">
              <div className="flex flex-col">
                <button className={clsx(gray, 'h-[20px] pl-[7px]')}>
                  <Icon name="grayBlock" className="size-[12px]" />
                  Delete Line
                </button>
                <div className="flex gap-[3px]">
                  <div className="grid h-[36px] w-[158px] grid-cols-[75px_1fr] items-center border border-[#bbb] pl-[8px]">
                    <button className={gray}><Icon name="percent" className="size-[12px]" />Discount Line</button>
                    <button className={gray}><Icon name="grayTag" className="size-[12px]" />Multi-Line Disc</button>
                    <button className={gray}><Icon name="undoGreen" className="size-[12px]" />Undo Discount</button>
                    <button className={gray}><Icon name="cartonFind" className="size-[12px]" />Check CO Info</button>
                  </div>
                  <div className="flex h-[36px] w-[94px] flex-col justify-center gap-[4px] border border-[#bbb] pl-[3px] whitespace-nowrap">
                    <span className="flex items-center gap-[4px] text-[#c4202c]"><i className="h-[8px] w-[10px] bg-[#f00]" />Low Item</span>
                    <span className="flex items-center gap-[4px] text-[#1c1c9c]"><i className="h-[8px] w-[10px] bg-[#0000f0]" />Professional Supply</span>
                  </div>
                </div>
              </div>
              <Totals />
            </div>

            <div className="flex grow items-center pb-[2px] pl-[20px]">
              <button className="flex items-center"><Icon name="notes" />Notes</button>
              <button className={clsx(gray, 'ml-[7px] leading-[12px]')}><Icon name="cartonOk" /><span><u>R</u>eceive<br />Order</span></button>
              <button className="ml-[4px] flex items-center gap-[4px] text-[9px] leading-[11px]"><Icon name="envelope" className="size-[12px]" /><span><u>E</u>mail<br />PO</span></button>
              <button className="ml-[11px] flex items-center"><Icon name="printer" /><Caption text="Print" /></button>
              <button className="ml-[98px] flex items-center"><Icon name="floppy" className="size-[11px]" /><Caption text="Save" /></button>
              <button className="ml-[10px] flex items-center"><Icon name="cancel" className="size-[12px]" /><Caption text="Cancel" /></button>
            </div>
          </div>
        </div>
      </div>

      <div className="flex h-[9px] items-center bg-[#eeedee] text-[7px] font-semibold whitespace-nowrap">
        <span className="w-[45px] overflow-hidden pl-[2px]">ID: Unassign</span>
        <Icon name="sheets" className="size-[10px]" />
        <span className="w-[65px] border-r border-[#bbb] pl-[17px]">13 Records</span>
        <Icon name="note" className="size-[8px]" />
        <span className="w-[55px] pl-[2px]">Add New...</span>
        <span className="h-full w-[115px] border border-[#bbb]" />
        <span className="h-full w-[113px] border border-[#bbb]" />
      </div>

      <div role="tooltip" className="absolute top-[125px] left-[329px] flex h-[12px] items-center border border-[#444] bg-[#ffffe1] px-[1px] font-['Roboto',sans-serif] whitespace-nowrap shadow-[2px_2px_1px_rgba(0,0,0,0.5)]">
        These options will limit the products shown below...
      </div>
      <svg viewBox="0 0 9 13" className="absolute top-[114px] left-[331px] h-[13px] w-[9px]">
        <path d="M1 1v10l2.500-2.300L5 12l1.500-.8L5 8h3z" fill="#fff" stroke="#333" strokeWidth=".8" />
      </svg>
    </section>
  );
}

// ---------------------------------------------------------------- main window

export default function App() {
  return (
    <div className="flex min-h-screen flex-col bg-black pt-[118px] pr-[186px] pb-[118px] pl-[184px] font-['Open_Sans','Noto_Sans',sans-serif] text-[8px] leading-none text-black">
      <main className="relative flex grow flex-col bg-[#eeedee]">
        <header className="flex h-[14px] shrink-0 items-center bg-linear-to-b from-[#8fb0d8] to-[#bdd2ea] pl-[1px]">
          <Icon name="gauge" className="size-[11px]" />
          <h1 className="grow text-center font-['Noto_Sans',sans-serif] text-[9px] whitespace-nowrap">
            MILLENNIUM HEALTHFITNESS EDITION |Main Drawer |&lt;hstrain&gt; |Thursday,July 30, 2015 | [193] NC Cary-Bradford - Hand and Stone
          </h1>
          <div className="flex gap-[1px] pr-[1px]">
            <WinButton kind="min" />
            <WinButton kind="max" />
            <WinButton kind="close" red />
          </div>
        </header>

        <nav className="flex h-[15px] shrink-0 items-center gap-[9px] border-b border-[#c8c8c8] bg-[#f6f6f7] pl-[4px] font-['Roboto',sans-serif]">
          {MENUS.map((m) => <button key={m}>{m}</button>)}
        </nav>

        <div className="flex h-[26px] shrink-0 items-center border-b-2 border-[#8f8f8f] pb-[1px]">
          {TOOLS.map((group, g) => (
            <div key={g} className={clsx('flex gap-[6px] border-l border-[#c4c4c4]', g === 0 ? 'ml-[4px] pr-[5px] pl-[5px]' : g === 3 ? 'pl-[8px]' : 'pr-[5px] pl-[5px]')}>
              {group.map((name) => (
                <button key={name} aria-label={name}><Icon name={name} /></button>
              ))}
            </div>
          ))}
          <div className="ml-[2px] flex h-[18px] w-[100px] flex-col justify-center border-t border-l border-[#999] pl-[2px] font-['Liberation_Sans',sans-serif] leading-[8px] whitespace-nowrap text-[#8a8a8a]">
            <span className="pl-[7px]">Day:211 (154 days left)</span>
            <span>Week:31 (22 weeks left)</span>
          </div>
          <div className="ml-[3px] h-[18px] border-l border-[#c4c4c4]" />
        </div>

        <section className="flex grow flex-col bg-[#d7e2f0] pr-[4px] pb-[4px] pl-[5px]">
          <div className="-mr-[4px] -ml-[5px] flex h-[21px] items-center bg-linear-to-b from-[#b5c8e0] to-[#d3dfee] pt-[4px] pr-[7px] pl-[5px]">
            <Icon name="notebook" className="size-[14px]" />
            <h2 className="grow pl-[48px] text-center font-['Noto_Sans',sans-serif] text-[9px]">Appointment Book 1 (Thursday,July 30, 2015) &lt;NC Cary-Bradford - Hand and Stone&gt;</h2>
            <div className="flex gap-[2px]">
              <WinButton kind="min" />
              <WinButton kind="max" />
              <WinButton kind="close" />
            </div>
          </div>

          <div className="flex grow flex-col bg-[#eeedee]">
            <BookToolbar />
            <div className="flex grow pr-[7px]">
              <div className="flex w-[52px] shrink-0 flex-col justify-between pt-[4px]">
                {SIDE.map((s) => (
                  <button key={s.text} className="flex h-[28px] flex-col items-center gap-[2px]">
                    <Icon name={s.icon} className="size-[17px]" />
                    <Caption text={s.text} hot={s.hot} />
                  </button>
                ))}
              </div>
              <Schedule />
            </div>
            <footer className="flex h-[22px] shrink-0 items-center gap-[2px] pt-[5px] font-['Liberation_Sans',sans-serif]">
              <button className="h-[15px] w-[52px] border border-transparent border-r-[#bbb] border-b-[#bbb]">Cascade</button>
              {STATUS.map((s) => (
                <span
                  key={s.text}
                  className={clsx(
                    'flex h-[15px] shrink-0 items-center justify-end border pr-[1px] whitespace-nowrap',
                    s.className,
                    s.raised ? 'border-[#fafafa] border-r-[#aaa] border-b-[#aaa]' : 'border-[#fafafa] border-t-[#aaa] border-l-[#aaa]',
                  )}
                >
                  {s.text}
                </span>
              ))}
              <svg viewBox="0 0 8 8" className="mt-auto ml-auto size-[8px]" stroke="#999">
                <path d="M0 8l8-8M3 8l5-5M6 8l2-2" />
              </svg>
            </footer>
          </div>
        </section>

        <PurchaseOrder />
      </main>
    </div>
  );
}
